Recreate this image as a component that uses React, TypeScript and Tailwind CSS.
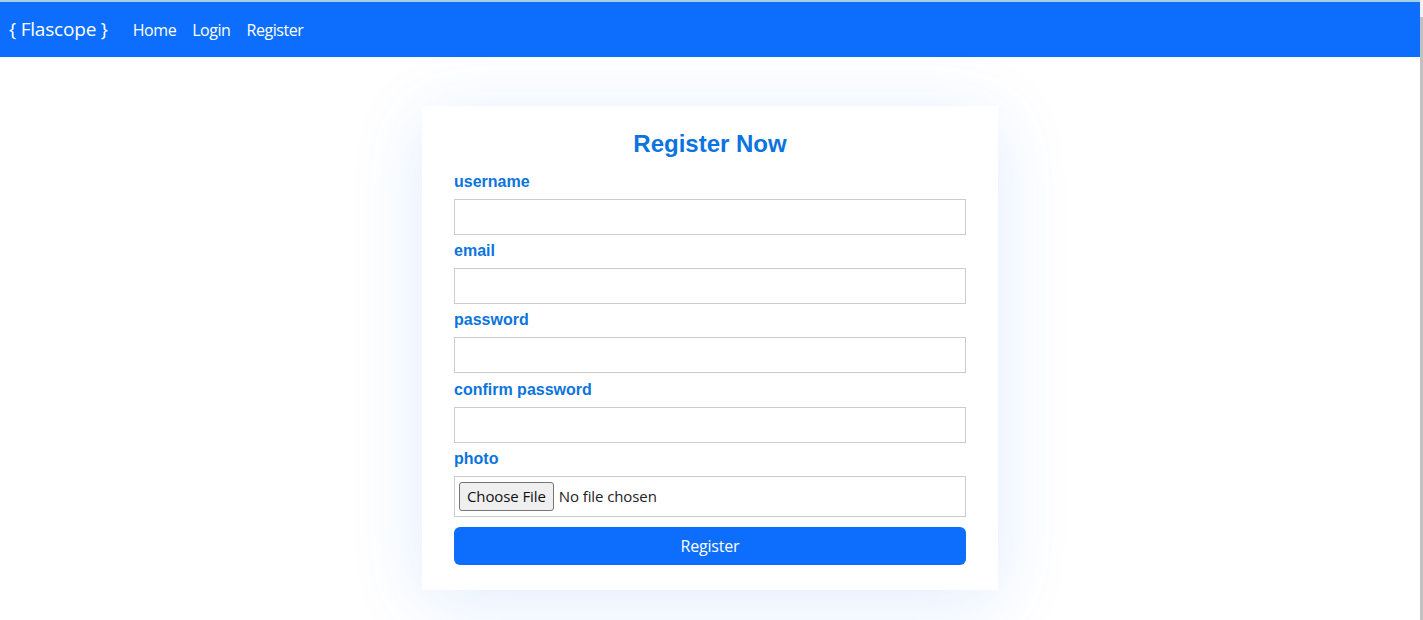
import React from 'react'

const fields = [
  { label: 'username', type: 'text' },
  { label: 'email', type: 'email' },
  { label: 'password', type: 'password' },
  { label: 'confirm password', type: 'password' },
]

export default function App() {
  return (
    <div className="flex min-h-[620px] bg-white font-['Open_Sans',sans-serif]">
      <div className="flex-1">
        {/* thin strip above the navbar */}
        <div className="h-[2px] bg-[#a6cfe2]" />

        {/* Navbar */}
        <nav className="h-[55px] bg-[#0d6efd] flex items-center px-[9px] text-white">
          <a href="#" className="text-[19px] tracking-[-0.2px] mr-[25px]">{'{ Flascope }'}</a>
          <div className="flex items-center gap-[16px] text-[16px] tracking-[-0.45px]">
            <a href="#">Home</a>
            <a href="#">Login</a>
            <a href="#">Register</a>
          </div>
        </nav>

        {/* Register card */}
        <div className="w-[576px] mx-auto mt-[49px] mb-[40px] bg-white px-[32px] pt-[24px] pb-[25px] shadow-[0_12px_70px_rgba(13,110,253,0.12)] font-['Liberation_Sans',Arial,sans-serif]">
          <h2 className="text-center text-[24px] leading-[28px] font-bold text-[#0b74de] mb-[14px]">
            Register Now
          </h2>

          <form onSubmit={e => e.preventDefault()}>
            {fields.map((f, i) => (
              <div key={f.label}>
                <label className={`block text-[16px] leading-[18px] font-bold text-[#0b74de] mb-[8px] ${i === 3 ? 'pt-[2px]' : 'pt-[1px]'}`}>
                  {f.label}
                </label>
                <input
                  type={f.type}
                  className="block w-full h-[36px] border border-[#cccccc] bg-white px-[8px] mb-[6px] outline-none"
                />
              </div>
            ))}

            <label className="block text-[16px] leading-[18px] pt-[1px] font-bold text-[#0b74de] mb-[8px]">
              photo
            </label>
            <input
              type="file"
              className="block w-full h-[41px] border border-[#cccccc] px-[4px] py-[5px] text-[15px] tracking-[-0.1px] text-[#222] font-['Open_Sans',sans-serif] file:bg-[#efefef] file:border file:border-[#767676] file:rounded-[3px] file:px-[7px] file:h-[29px] file:mr-[5px] file:text-[#111]"
            />

            <button
              type="submit"
              className="mt-[10px] w-full h-[38px] rounded-[6px] bg-[#0d6efd] text-white text-[16px] tracking-[-0.2px] font-['Open_Sans',sans-serif]"
            >
              Register
            </button>
          </form>
        </div>
      </div>

      {/* scrollbar edge */}
      <div className="w-[3px] bg-[#f1f1f1] pt-[17px]">
        <div className="h-full bg-[#c1c1c1]" />
      </div>
    </div>
  )
}
